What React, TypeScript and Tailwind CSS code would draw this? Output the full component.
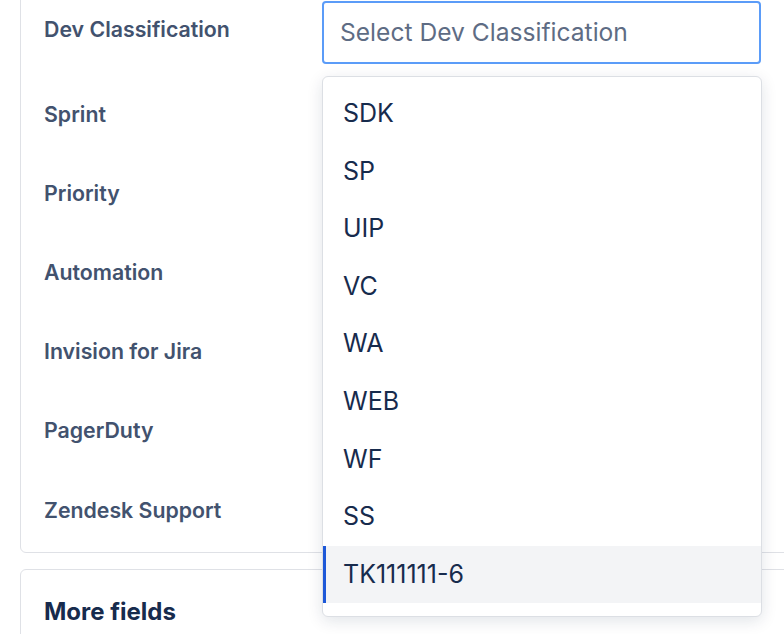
import React from "react";

const labels = [
  "Sprint",
  "Priority",
  "Automation",
  "Invision for Jira",
  "PagerDuty",
  "Zendesk Support",
];

const options = ["SDK", "SP", "UIP", "VC", "WA", "WEB", "WF", "SS", "TK111111-6"];

export default function App() {
  const selected = "TK111111-6";

  return (
    <div
      className="h-[634px] w-[784px] overflow-hidden bg-white"
      style={{ fontFamily: "Inter, 'Noto Sans', sans-serif" }}
    >
      <div className="-mt-6 pl-5">
        {/* Details card */}
        <div className="w-[800px] rounded-md border border-[#dfe1e6] bg-white px-[23px] pt-6 pb-[2px]">
          {/* Dev Classification row */}
          <div className="flex h-[74px] items-start">
            <div className="w-[278px] pt-[14px] text-[21.3px] leading-[28px] font-semibold text-[#42526e]">
              Dev Classification
            </div>
            <div className="relative">
              <div className="flex h-[63px] w-[439px] items-center rounded-[4px] border-2 border-[#5b9cf8] bg-white px-4">
                <span className="text-[24.6px] text-[#5e6c84]">Select Dev Classification</span>
              </div>

              {/* Dropdown menu */}
              <div className="absolute top-[75px] left-0 z-10 w-[440px] rounded-md border border-[#dcdfe4] bg-white pt-2 pb-[13px] shadow-[0_4px_16px_rgba(9,30,66,0.12)]">
                {options.map((opt) => (
                  <div
                    key={opt}
                    className={`flex h-[57.6px] items-center border-l-[3.5px] pl-[17px] text-[25px] text-[#172b4d] ${
                      opt === selected
                        ? "border-[#1d58d8] bg-[#f3f4f6]"
                        : "border-transparent"
                    }`}
                  >
                    {opt}
                  </div>
                ))}
              </div>
            </div>
          </div>

          {labels.map((label) => (
            <div key={label} className="flex h-[79.2px] items-center">
              <div className="text-[21.3px] font-semibold text-[#42526e]">{label}</div>
            </div>
          ))}
        </div>

        {/* More fields card */}
        <div className="mt-4 h-[120px] w-[800px] rounded-md border border-[#dfe1e6] bg-white px-[23px] pt-[26px]">
          <h2 className="text-[24px] leading-[32px] font-bold text-[#172b4d]">More fields</h2>
        </div>
      </div>
    </div>
  );
}
